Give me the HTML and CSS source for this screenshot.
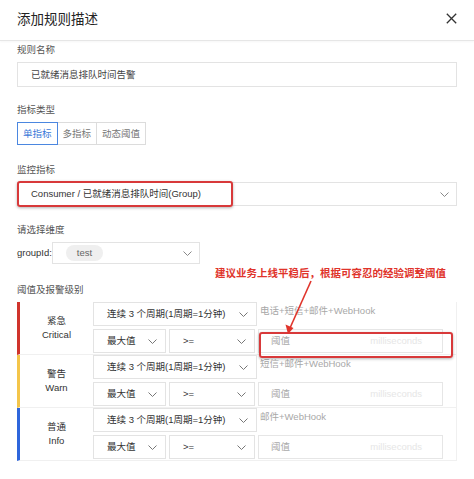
FILE: index.html
```html
<!DOCTYPE html>
<html lang="zh-CN">
<head>
  <meta charset="UTF-8" />
  <title>添加规则描述</title>
  <meta name="viewport" content="width=device-width, initial-scale=1.0" />
  <link rel="stylesheet" href="styles.css">
</head>
<body>

  <!-- Header -->
  <div class="header">
    <span class="title">添加规则描述</span>
    <svg class="close" width="11" height="11" viewBox="0 0 11 11">
      <path d="M0.8 0.8 L10.2 10.2 M10.2 0.8 L0.8 10.2" stroke="#333" stroke-width="1.3" fill="none"/>
    </svg>
  </div>

  <div class="content">

    <!-- Rule name -->
    <div class="field f-name">
      <div class="label">规则名称</div>
      <div class="input">已就绪消息排队时间告警</div>
    </div>

    <!-- Metric type -->
    <div class="field f-type">
      <div class="label">指标类型</div>
      <div class="tabs">
        <span class="tab active">单指标</span>
        <span class="tab">多指标</span>
        <span class="tab">动态阈值</span>
      </div>
    </div>

    <!-- Metric -->
    <div class="field f-metric">
      <div class="label">监控指标</div>
      <div class="select metric-select">
        <span>Consumer / 已就绪消息排队时间(Group)</span>
        <svg class="chev" width="9" height="5" viewBox="0 0 9 5"><path d="M0.5 0.5 L4.5 4.5 L8.5 0.5" fill="none" stroke="#888" stroke-width="1"/></svg>
        <div class="mark mark-metric"></div>
      </div>
    </div>

    <!-- Dimension -->
    <div class="field f-dim">
      <div class="label">请选择维度</div>
      <div class="dim-row">
        <span class="dim-name">groupId:</span>
        <div class="select dim-select">
          <span class="tag">test</span>
          <svg class="chev" width="9" height="5" viewBox="0 0 9 5"><path d="M0.5 0.5 L4.5 4.5 L8.5 0.5" fill="none" stroke="#888" stroke-width="1"/></svg>
        </div>
      </div>
    </div>

    <!-- Thresholds -->
    <div class="field f-levels">
      <div class="label">阈值及报警级别</div>
      <div class="levels">

        <div class="level critical">
          <div class="level-name"><span>紧急</span><span>Critical</span></div>
          <div class="level-body">
            <div class="row">
              <div class="select s-period"><span>连续 3 个周期(1周期=1分钟)</span><svg class="chev" width="9" height="5" viewBox="0 0 9 5"><path d="M0.5 0.5 L4.5 4.5 L8.5 0.5" fill="none" stroke="#777" stroke-width="1"/></svg></div>
              <span class="notify">电话+短信+邮件+WebHook</span>
            </div>
            <div class="row">
              <div class="select s-agg"><span>最大值</span><svg class="chev" width="9" height="5" viewBox="0 0 9 5"><path d="M0.5 0.5 L4.5 4.5 L8.5 0.5" fill="none" stroke="#777" stroke-width="1"/></svg></div>
              <div class="select s-op"><span>&gt;=</span><svg class="chev" width="9" height="5" viewBox="0 0 9 5"><path d="M0.5 0.5 L4.5 4.5 L8.5 0.5" fill="none" stroke="#777" stroke-width="1"/></svg></div>
              <div class="threshold">
                <span class="ph">阈值</span><span class="unit">milliseconds</span>
                <div class="mark mark-threshold"></div>
              </div>
            </div>
          </div>
        </div>

        <div class="level warn">
          <div class="level-name"><span>警告</span><span>Warn</span></div>
          <div class="level-body">
            <div class="row">
              <div class="select s-period"><span>连续 3 个周期(1周期=1分钟)</span><svg class="chev" width="9" height="5" viewBox="0 0 9 5"><path d="M0.5 0.5 L4.5 4.5 L8.5 0.5" fill="none" stroke="#777" stroke-width="1"/></svg></div>
              <span class="notify">短信+邮件+WebHook</span>
            </div>
            <div class="row">
              <div class="select s-agg"><span>最大值</span><svg class="chev" width="9" height="5" viewBox="0 0 9 5"><path d="M0.5 0.5 L4.5 4.5 L8.5 0.5" fill="none" stroke="#777" stroke-width="1"/></svg></div>
              <div class="select s-op"><span>&gt;=</span><svg class="chev" width="9" height="5" viewBox="0 0 9 5"><path d="M0.5 0.5 L4.5 4.5 L8.5 0.5" fill="none" stroke="#777" stroke-width="1"/></svg></div>
              <div class="threshold"><span class="ph">阈值</span><span class="unit">milliseconds</span></div>
            </div>
          </div>
        </div>

        <div class="level info">
          <div class="level-name"><span>普通</span><span>Info</span></div>
          <div class="level-body">
            <div class="row">
              <div class="select s-period"><span>连续 3 个周期(1周期=1分钟)</span><svg class="chev" width="9" height="5" viewBox="0 0 9 5"><path d="M0.5 0.5 L4.5 4.5 L8.5 0.5" fill="none" stroke="#777" stroke-width="1"/></svg></div>
              <span class="notify">邮件+WebHook</span>
            </div>
            <div class="row">
              <div class="select s-agg"><span>最大值</span><svg class="chev" width="9" height="5" viewBox="0 0 9 5"><path d="M0.5 0.5 L4.5 4.5 L8.5 0.5" fill="none" stroke="#777" stroke-width="1"/></svg></div>
              <div class="select s-op"><span>&gt;=</span><svg class="chev" width="9" height="5" viewBox="0 0 9 5"><path d="M0.5 0.5 L4.5 4.5 L8.5 0.5" fill="none" stroke="#777" stroke-width="1"/></svg></div>
              <div class="threshold"><span class="ph">阈值</span><span class="unit">milliseconds</span></div>
            </div>
          </div>
        </div>

      </div>
    </div>

  </div>

  <!-- Annotation overlay -->
  <div class="note">建议业务上线平稳后，根据可容忍的经验调整阈值</div>
  <svg class="arrow" width="474" height="479" viewBox="0 0 474 479">
    <path d="M311 281 L290 328" stroke="#e0342b" stroke-width="1.6" fill="none"/>
    <path d="M288 334 L285.5 324.5 L293.5 328 Z" fill="#e0342b"/>
  </svg>

</body>
</html>
```

FILE: styles.css
```css
body {
  margin: 0;
  position: relative;
  width: 474px;
  height: 479px;
  overflow: hidden;
  background: #fff;
  color: #333;
  font-family: "Liberation Sans", "Noto Sans CJK SC", sans-serif;
  font-size: 9.5px;
  line-height: 14px;
}

.header {
  height: 40px;
  padding: 0 17px;
  border-bottom: 1px solid #e6e6e6;
  box-shadow: 0 1px 2px rgba(0,0,0,0.04);
  display: flex;
  align-items: center;
  justify-content: space-between;
}

.title {
  font-size: 13.5px;
  color: #222;
}

.close {
  margin-bottom: 4px;
}

.content {
  padding: 0 17px;
}

.field {
  margin-top: 18px;
}

.f-name { margin-top: 2px; }
.f-type { margin-top: 16px; }
.f-metric { margin-top: 18px; }
.f-dim { margin-top: 17px; }
.f-levels { margin-top: 19px; }

.label {
  color: #555;
  margin-bottom: 5px;
}

.input {
  height: 25px;
  box-sizing: border-box;
  border: 1px solid #e3e3e3;
  padding: 0 13px;
  display: flex;
  align-items: center;
  color: #444;
}

/* Tabs */
.tabs {
  display: flex;
}

.tab {
  height: 23px;
  box-sizing: border-box;
  padding: 0 5px;
  border: 1px solid #dcdcdc;
  border-left: none;
  display: flex;
  align-items: center;
  color: #777;
}

.tab.active {
  border: 1px solid #4b87e0;
  color: #3a78d8;
}

/* Selects */
.select {
  position: relative;
  box-sizing: border-box;
  border: 1px solid #e3e3e3;
  background: #fff;
  display: flex;
  align-items: center;
  justify-content: space-between;
  padding: 0 8px 0 13px;
  color: #333;
}

.metric-select {
  height: 24px;
  padding-right: 7px;
}

.dim-row {
  display: flex;
  align-items: center;
}

.dim-name {
  width: 35px;
  flex-shrink: 0;
  color: #333;
  white-space: nowrap;
}

.dim-select {
  width: 148px;
  height: 22px;
  padding-right: 7px;
}

.tag {
  width: 37px;
  height: 16px;
  border-radius: 8px;
  background: #efefef;
  color: #666;
  display: flex;
  align-items: center;
  justify-content: center;
}

/* Levels */
.level {
  display: flex;
  border: 1px solid #f0f0f0;
  border-top: none;
  border-left: 3px solid;
}

.level.critical { border-left-color: #d0342c; }
.level.warn { border-left-color: #f4c54a; }
.level.info { border-left-color: #2f66dc; }

.level-name {
  width: 73px;
  display: flex;
  flex-direction: column;
  align-items: center;
  justify-content: center;
  color: #333;
}

.level-body {
  flex: 1;
  display: flex;
  flex-direction: column;
  gap: 3px;
  padding-bottom: 1px;
}

.row {
  display: flex;
  align-items: center;
  gap: 3px;
}

.row .select {
  height: 24px;
}

.s-period { width: 164px; }
.s-agg { width: 73px; }
.s-op { width: 86px; }

.notify {
  color: #a8a8a8;
  align-self: flex-start;
  line-height: 18px;
}

.threshold {
  position: relative;
  width: 185px;
  height: 24px;
  box-sizing: border-box;
  border: 1px solid #e6e6e6;
  padding: 0 20px 0 12px;
  display: flex;
  align-items: center;
  justify-content: space-between;
}

.ph {
  color: #aaa;
}

.unit {
  color: #e6e6e6;
}

/* Annotation marks */
.mark {
  position: absolute;
  box-sizing: border-box;
  border: 2px solid #d8393a;
  border-radius: 3px;
  box-shadow: 0 1px 3px rgba(0,0,0,0.3);
  pointer-events: none;
}

.mark-metric {
  left: -1px;
  top: -2px;
  width: 216px;
  height: 26px;
}

.mark-threshold {
  left: 0;
  top: 2px;
  width: 194px;
  height: 26px;
}

.note {
  position: absolute;
  left: 215px;
  top: 266px;
  color: #e0342b;
  font-size: 10.5px;
  font-weight: bold;
  line-height: 14px;
  white-space: nowrap;
}

.arrow {
  position: absolute;
  left: 0;
  top: 0;
  pointer-events: none;
}
```
